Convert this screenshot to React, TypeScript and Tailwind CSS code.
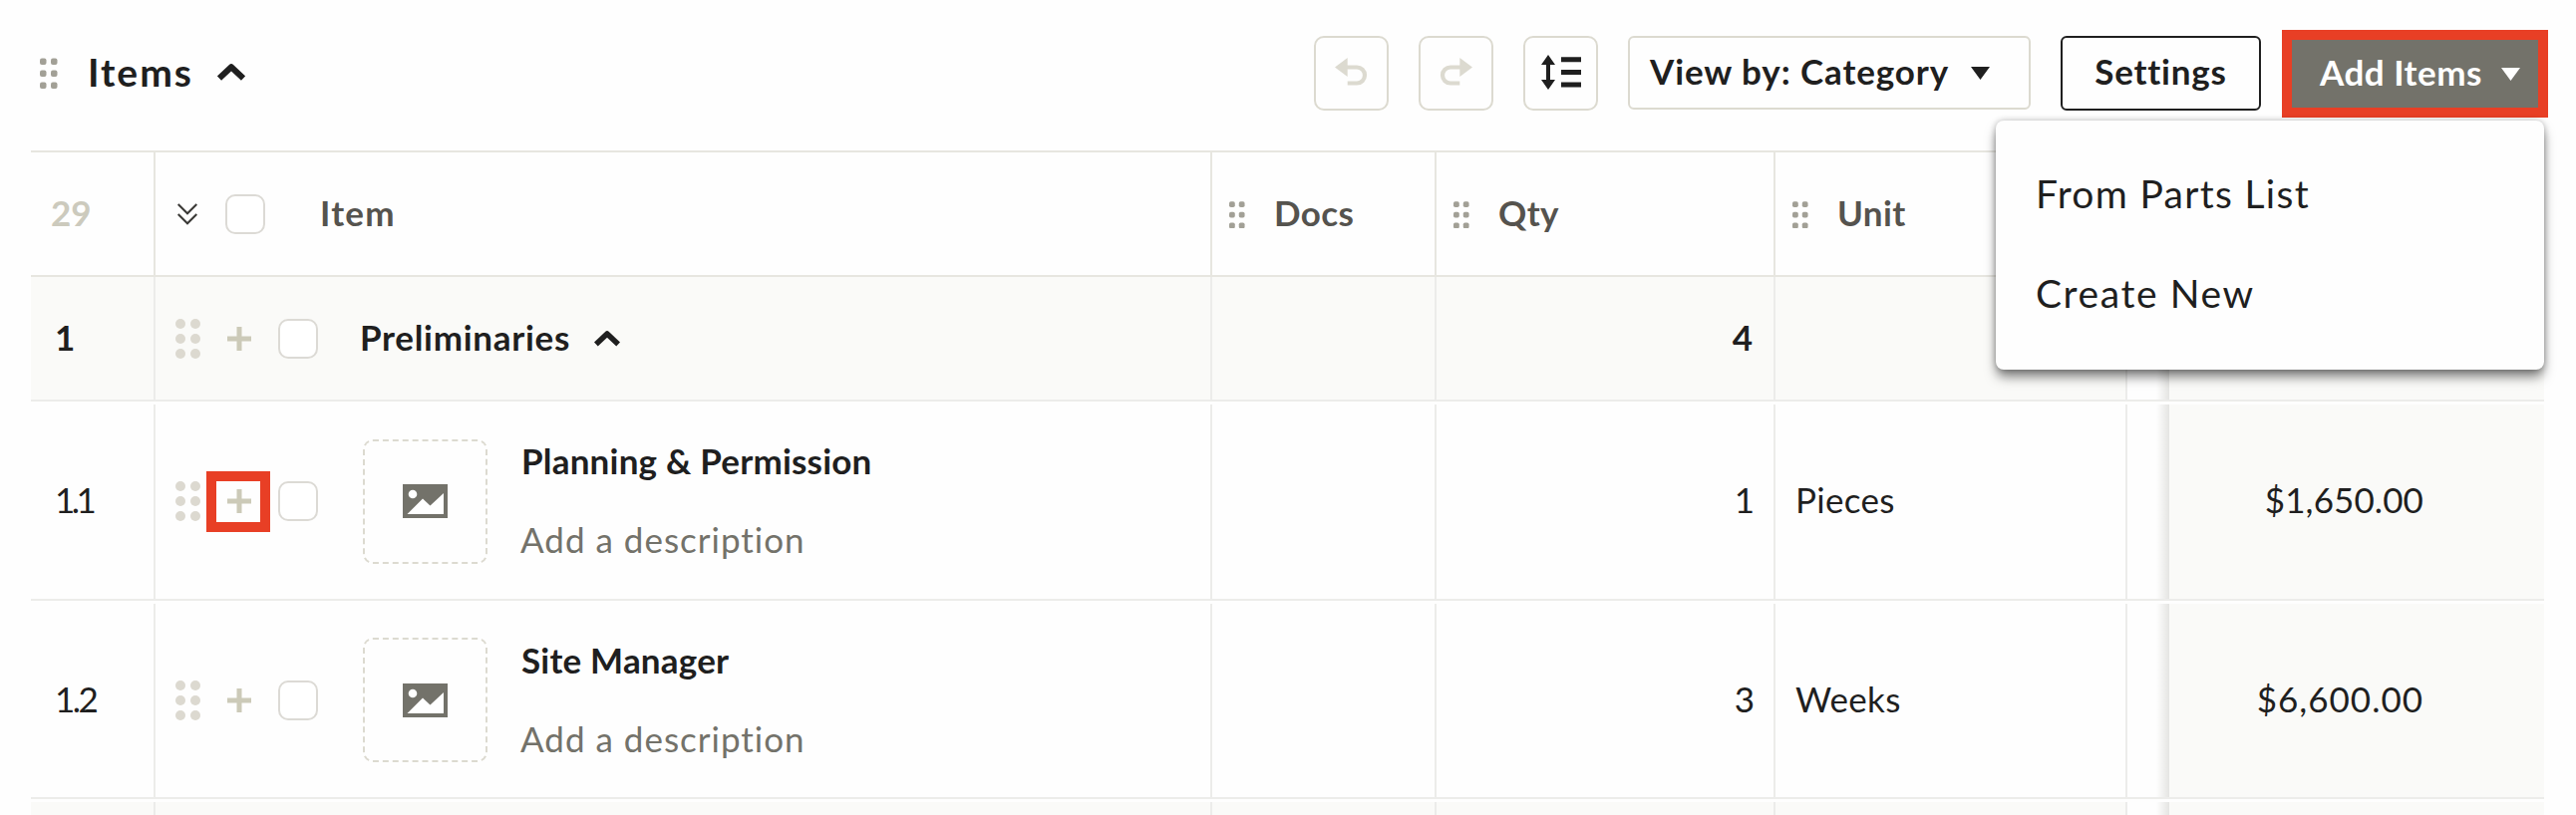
function Grip({ className }: { className?: string }) {
  return (
    <svg viewBox="0 0 18 30" className={className} fill="#a2a096">
      {[0, 12, 24].map((y) => (
        <g key={y}>
          <rect x="0" y={y} width="6.5" height="6.5" rx="2" />
          <rect x="11" y={y} width="6.5" height="6.5" rx="2" />
        </g>
      ))}
    </svg>
  );
}

function Dots() {
  return (
    <svg width="26" height="40" viewBox="0 0 26 40" fill="#dcd9d0">
      {[5, 20, 35].map((y) => (
        <g key={y}>
          <circle cx="5" cy={y} r="5" />
          <circle cx="20" cy={y} r="5" />
        </g>
      ))}
    </svg>
  );
}

function Plus() {
  return (
    <svg width="24" height="24" viewBox="0 0 24 24" fill="#cccab8">
      <path d="M9.5 0h5v9.500H24v5h-9.500V24h-5v-9.500H0v-5h9.500z" />
    </svg>
  );
}

function Checkbox() {
  return <div className="size-10 rounded-[10px] border-2 border-[#dcdad5] bg-white" />;
}

function ChevronUp({ className }: { className?: string }) {
  return (
    <svg viewBox="0 0 28 18" className={className} fill="none" stroke="#1f1f1f" strokeWidth="6">
      <path d="M2 15.500 14 4.200 26 15.500" strokeLinejoin="round" />
    </svg>
  );
}

function Caret({ className }: { className?: string }) {
  return (
    <svg width="19" height="13" viewBox="0 0 19 13" className={className}>
      <path d="M0 0H19L9.500 13Z" fill="currentColor" />
    </svg>
  );
}

function UndoIcon({ className }: { className?: string }) {
  return (
    <svg width="33" height="29" viewBox="0 0 33 29" className={className}>
      <path d="M0 9.500 12.700 0v19z" fill="#dcdad0" />
      <path d="M12 9.500H22a8 8 0 0 1 8 8v0a8 8 0 0 1-8 8H12.700" fill="none" stroke="#dcdad0" strokeWidth="4.2" />
    </svg>
  );
}

const iconButton = "flex h-[75px] w-[75px] items-center justify-center rounded-[10px] border-2 border-[#dcdad0] pb-0.5";

function Toolbar() {
  return (
    <div className="flex h-[151px] items-start pl-10">
      <Grip className="mt-[58px] h-[31px] w-[18px]" />
      <h1 className="mt-[46px] ml-[30px] w-[113px] text-[39px] leading-[52px] font-bold tracking-[2px]">Items</h1>
      <ChevronUp className="mt-[63px] ml-[17px] h-[18px] w-[28px]" />
      <div className="ml-[1072px] flex gap-[30px] pt-9">
        <button className={iconButton}>
          <UndoIcon />
        </button>
        <button className={iconButton}>
          <UndoIcon className="-scale-x-100" />
        </button>
        <button className={iconButton}>
          <svg width="40" height="35" viewBox="0 0 40 35" fill="#1f1f1f">
            <path d="M7 0 14 10H9V25h5L7 35 0 25H5V10H0zM20 2.300h20v5H20zM20 15h20v5H20zM20 27.500h20v5H20z" />
          </svg>
        </button>
        <button className="flex h-[74px] w-[404px] items-center rounded-md border-2 border-[#dcdad0] pl-5">
          <span className="w-[305px] pb-[3px] text-left text-[35px] font-bold tracking-[0.9px] whitespace-nowrap">View by: Category</span>
          <Caret className="ml-[17px]" />
        </button>
        <button className="h-[75px] w-[201px] rounded-md border-2 border-[#1f1f1f] pb-[4px] text-[35px] font-bold tracking-[0.8px]">
          Settings
        </button>
      </div>
      <button className="mt-[30px] ml-[21px] flex h-[88px] w-[267px] items-center border-10 border-[#e83f25] bg-[#73726a] pl-[28px] text-white">
        <span className="w-[165px] pb-[3px] text-left text-[35px] font-bold tracking-[0.5px] whitespace-nowrap">Add Items</span>
        <Caret className="ml-[17px]" />
      </button>
    </div>
  );
}

function HeadCell({ label }: { label: string }) {
  return (
    <div className="flex items-center border-r-2 border-[#e7e6e0] pl-[17px] text-[#55534e]">
      <Grip className="mt-[2px] h-[27px] w-[16px]" />
      <span className="ml-[29px] pb-[3px] text-[35px] font-bold tracking-[0.4px]">{label}</span>
    </div>
  );
}

const cols = "grid grid-cols-[125px_1060px_225px_340px_353px_42px_376px]";

const items = [
  {
    no: "1.1",
    name: "Planning & Permission",
    qty: "1",
    unit: "Pieces",
    total: "$1,650.00",
    marked: true,
    row: "h-[200px]",
    noTracking: "tracking-[-3.5px]",
    totalTracking: "tracking-[0.1px]",
  },
  {
    no: "1.2",
    name: "Site Manager",
    qty: "3",
    unit: "Weeks",
    total: "$6,600.00",
    marked: false,
    row: "h-[199px]",
    noTracking: "tracking-[-2.5px]",
    totalTracking: "tracking-[1px]",
  },
];

// fading shadow to the left of the pinned total column
function Edge() {
  return (
    <div className="flex justify-end bg-[#fefefe]">
      <div className="w-[13px] bg-linear-to-r from-[#fefefe] to-[#e4e4e2]" />
    </div>
  );
}

export default function App() {
  return (
    <div className="relative h-[818px] w-[2584px] overflow-hidden bg-[#fefefe] font-[Lato,sans-serif] text-[#1f1f1f]">
      <Toolbar />

      <div className="ml-[31px] w-[2521px]">
        <div className={`${cols} h-[127px] border-y-2 border-[#e7e6e0]`}>
          <div className="flex items-center border-r-2 border-[#e7e6e0] pb-[3px] pl-5 text-[35px] font-bold text-[#cccabd]">29</div>
          <div className="flex items-center border-r-2 border-[#e7e6e0] pl-[22px]">
            <svg width="20" height="22" viewBox="0 0 20 22" fill="none" stroke="#3a3936" strokeWidth="2">
              <path d="m.7 1 9.300 9.300L19.300 1M.7 11l9.300 9.300L19.300 11" />
            </svg>
            <div className="ml-[28px]">
              <Checkbox />
            </div>
            <span className="ml-[55px] pb-[3px] text-[35px] font-bold tracking-[1.3px] text-[#55534e]">Item</span>
          </div>
          <HeadCell label="Docs" />
          <HeadCell label="Qty" />
          <HeadCell label="Unit" />
        </div>

        <div className={`${cols} h-[125px] border-b-2 border-[#ececea] bg-[#fafaf8] *:border-[#ececea]`}>
          <div className="flex items-center border-r-2 pb-[3px] pl-6 text-[35px] font-bold">1</div>
          <div className="flex items-center border-r-2 pl-5">
            <Dots />
            <div className="ml-[26px]">
              <Plus />
            </div>
            <div className="ml-[27px]">
              <Checkbox />
            </div>
            <span className="ml-[42px] w-[211px] pb-[3px] text-[35px] font-bold tracking-[0.7px] whitespace-nowrap">Preliminaries</span>
            <ChevronUp className="ml-6 h-[17px] w-[26px]" />
          </div>
          <div className="border-r-2" />
          <div className="flex items-center justify-end border-r-2 pr-[21px] pb-[3px] text-[35px] font-bold">4</div>
          <div className="border-r-2" />
          <Edge />
          <div />
        </div>

        {items.map((item) => (
          <div key={item.no} className={`${item.row} border-b-2 border-[#ececea] pt-[3px]`}>
            <div className={`${cols} h-full *:border-[#ececea]`}>
              <div className={`flex items-center border-r-2 pb-[4px] pl-6 text-[35px] ${item.noTracking}`}>{item.no}</div>
              <div className="flex items-center border-r-2 pb-px pl-5">
                <Dots />
                <div
                  className={
                    item.marked
                      ? "ml-[5px] flex h-[61px] w-[64px] items-center justify-center border-10 border-[#e83f25] pl-[2px]"
                      : "ml-[5px] flex w-[64px] justify-center pl-[2px]"
                  }
                >
                  <Plus />
                </div>
                <div className="ml-2">
                  <Checkbox />
                </div>
                <div className="ml-[45px] flex size-[125px] items-center justify-center rounded-[10px] border-2 border-dashed border-[#dcdad0]">
                  <svg width="45" height="34" viewBox="0 0 45 34">
                    <path d="M0 0h45v34H0z" fill="#73726a" />
                    <circle cx="10" cy="10" r="4.300" fill="#fff" />
                    <path d="M4.500 30 20 14.500l7.500 7L41 9v21z" fill="#fff" />
                  </svg>
                </div>
                <div className="ml-[34px] flex flex-col gap-[35px] pb-[3px] text-[35px] leading-[44px]">
                  <span className="font-bold tracking-[0.2px]">{item.name}</span>
                  <span className="-ml-px tracking-[1px] text-[#73726a]">Add a description</span>
                </div>
              </div>
              <div className="border-r-2" />
              <div className="flex items-center justify-end border-r-2 pr-[19px] pb-[4px] text-[35px]">{item.qty}</div>
              <div className="flex items-center border-r-2 pb-[4px] pl-5 text-[35px] tracking-[0.3px]">{item.unit}</div>
              <Edge />
              <div className={`flex items-center justify-end bg-[#fafaf8] pr-[121px] pb-[4px] text-[35px] ${item.totalTracking}`}>
                {item.total}
              </div>
            </div>
          </div>
        ))}

        <div className={`${cols} mt-[3px] h-5 bg-[#fafaf8] *:border-[#ececea]`}>
          <div className="border-r-2" />
          <div className="border-r-2" />
          <div className="border-r-2" />
          <div className="border-r-2" />
          <div className="border-r-2" />
          <Edge />
          <div />
        </div>
      </div>

      <div className="absolute top-[121px] left-[2002px] flex h-[250px] w-[550px] flex-col gap-[50px] rounded-lg bg-[#fefefe] pt-12 pl-10 text-[39px] leading-[50px] shadow-[0_8px_12px_-1px_rgba(0,0,0,0.5),0_0_6px_rgba(0,0,0,0.25)]">
        <span className="tracking-[1.3px]">From Parts List</span>
        <span className="tracking-[1.6px]">Create New</span>
      </div>
    </div>
  );
}
